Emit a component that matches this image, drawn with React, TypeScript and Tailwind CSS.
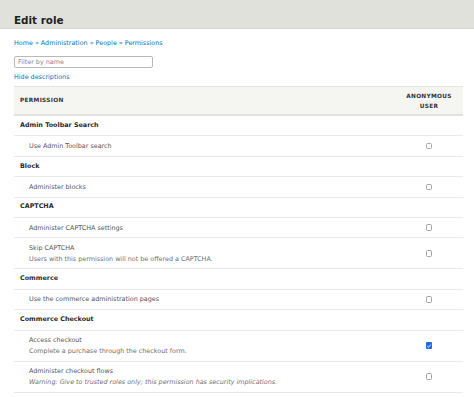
import React from 'react';

type Row =
  | { kind: 'group'; label: string }
  | { kind: 'perm'; label: string; desc?: string; warn?: boolean; checked?: boolean };

const rows: Row[] = [
  { kind: 'group', label: 'Admin Toolbar Search' },
  { kind: 'perm', label: 'Use Admin Toolbar search' },
  { kind: 'group', label: 'Block' },
  { kind: 'perm', label: 'Administer blocks' },
  { kind: 'group', label: 'CAPTCHA' },
  { kind: 'perm', label: 'Administer CAPTCHA settings' },
  { kind: 'perm', label: 'Skip CAPTCHA', desc: 'Users with this permission will not be offered a CAPTCHA.' },
  { kind: 'group', label: 'Commerce' },
  { kind: 'perm', label: 'Use the commerce administration pages' },
  { kind: 'group', label: 'Commerce Checkout' },
  { kind: 'perm', label: 'Access checkout', desc: 'Complete a purchase through the checkout form.', checked: true },
  {
    kind: 'perm',
    label: 'Administer checkout flows',
    desc: 'Warning: Give to trusted roles only; this permission has security implications.',
    warn: true,
  },
];

const Checkbox = ({ checked }: { checked?: boolean }) =>
  checked ? (
    <span className="flex w-[6.5px] h-[6.5px] rounded-[1px] bg-[#1b6fe0] items-center justify-center">
      <svg viewBox="0 0 6 6" className="w-[6px] h-[6px]">
        <path d="M1.3 3.2 L2.5 4.3 L4.7 1.7" fill="none" stroke="white" strokeWidth="0.9" />
      </svg>
    </span>
  ) : (
    <span className="block w-[6.5px] h-[6.5px] rounded-[1.5px] border border-[#a3a3a3] bg-white" />
  );

export default function App() {
  return (
    <div className="w-[474px] h-[397px] overflow-hidden bg-white text-[#333] font-['DejaVu_Sans',sans-serif]">
      <div className="h-[29px] bg-[#e1e1db] border-b border-[#d6d5cf] px-[14px] pt-[12px]">
        <h1 className="text-[10.4px] font-bold leading-[16px] text-[#222]">Edit role</h1>
      </div>

      <div className="px-[14px]">
        <div className="mt-[10px] text-[6.4px] leading-[8px] text-[#0074bd]">
          Home » Administration » People » Permissions
        </div>

        <div className="mt-[9px] w-[139px] h-[12px] border border-[#b8b8b8] rounded-[2px] bg-white flex items-center px-[3px]">
          <span className="text-[6.4px] leading-[8px] text-[#888]">Filter by name</span>
        </div>

        <div className="mt-[5px] text-[6.4px] leading-[8px] text-[#0074bd]">Hide descriptions</div>

        <div className="mt-[5px] w-[449px]">
          <div className="flex h-[30px] bg-[#f5f5f2] border-t border-[#e6e4df] border-b-2 border-b-[#e3e2dc] text-[5.8px] font-bold uppercase tracking-[0.3px] text-[#333]">
            <div className="flex-1 flex items-center pl-[6px]">Permission</div>
            <div className="w-[68px] flex flex-col items-center justify-center leading-[10px]">
              <span>Anonymous</span>
              <span>User</span>
            </div>
          </div>

          {rows.map((r, i) =>
            r.kind === 'group' ? (
              <div
                key={i}
                className="flex items-center h-[20.4px] border-b border-[#eceae5] pl-[6px] text-[6.4px] font-bold text-[#2a2a2a]"
              >
                {r.label}
              </div>
            ) : (
              <div
                key={i}
                className={`flex items-center ${r.desc ? 'h-[31px]' : 'h-[20.4px]'} border-b border-[#eceae5] text-[6.4px]`}
              >
                <div className="flex-1 pl-[15px] flex flex-col">
                  <span className="leading-[10px] text-[#555]">{r.label}</span>
                  {r.desc && (
                    <span className="mt-[1px] leading-[10px] text-[#707070]">
                      {r.warn ? <em>{r.desc}</em> : r.desc}
                    </span>
                  )}
                </div>
                <div className="w-[68px] flex justify-center">
                  <Checkbox checked={r.checked} />
                </div>
              </div>
            )
          )}
        </div>
      </div>
    </div>
  );
}
